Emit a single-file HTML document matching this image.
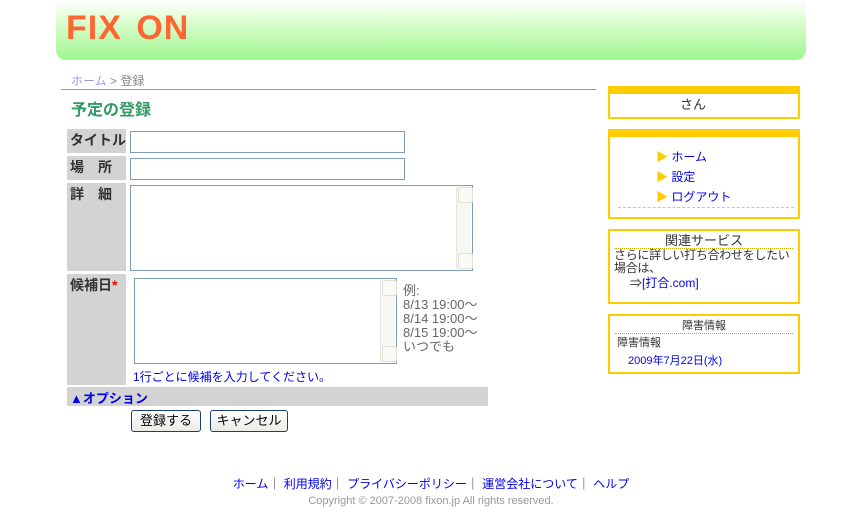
<!DOCTYPE html>
<html><head><meta charset="utf-8"><style>
*{margin:0;padding:0;box-sizing:border-box}
body{width:862px;height:521px;background:#fff;font-family:"Liberation Sans","Noto Sans CJK JP",sans-serif;font-size:12px;color:#333;position:relative;overflow:hidden}
.a{position:absolute}
.lbl{position:absolute;left:67px;width:59px;background:#d3d3d3;font-weight:bold;font-size:14px;color:#333;padding:1px 0 0 3px}
.inp{position:absolute;border:1px solid #7f9db9;background:#fff}
.sb{position:absolute;right:1px;top:1px;bottom:1px;width:15px;background:#f7f7f3;border-left:1px solid #e8e8e0}
.sb:before,.sb:after{content:"";position:absolute;left:1px;width:13px;height:14px;border:1px solid #e0e0d8;border-radius:2px;background:#fafaf6}
.sb:before{top:0}.sb:after{bottom:0}
.box{position:absolute;left:608px;width:192px;border:2px solid #ffcc00;background:#fff}
.btn{position:absolute;top:410px;height:22px;border:1px solid #1c3f6e;border-radius:3px;background:linear-gradient(#fff,#ecebe6);font-size:13px;text-align:center;line-height:20px;color:#000}
a{color:#0000ee;text-decoration:none}
</style></head><body>
<div class="a" style="left:56px;top:0;width:750px;height:60px;border-radius:0 0 10px 10px;background:linear-gradient(#fff 0%,#ddfdd0 35%,#9ef78e 100%)"></div>
<div class="a" style="left:66px;top:9px;font-size:34px;font-weight:bold;color:#ff6633;letter-spacing:1px;word-spacing:4px">FIX ON</div>
<div class="a" style="left:71px;top:74px;font-size:12px;line-height:14px;color:#888"><span style="color:#9999ee">ホーム</span> &gt; 登録</div>
<div class="a" style="left:61px;top:89px;width:535px;height:1px;background:#999"></div>
<div class="a" style="left:71px;top:96px;font-size:16px;font-weight:bold;color:#339966">予定の登録</div>

<div class="lbl" style="top:129px;height:24px">タイトル</div>
<div class="lbl" style="top:156px;height:24px">場　所</div>
<div class="lbl" style="top:183px;height:88px">詳　細</div>
<div class="lbl" style="top:274px;height:111px">候補日<span style="color:#f00">*</span></div>
<div class="inp" style="left:130px;top:131px;width:275px;height:22px"></div>
<div class="inp" style="left:130px;top:158px;width:275px;height:22px"></div>
<div class="inp" style="left:130px;top:185px;width:343px;height:86px"><div class="sb"></div></div>
<div class="inp" style="left:134px;top:278px;width:263px;height:86px"><div class="sb"></div></div>
<div class="a" style="left:403px;top:284px;font-size:13px;line-height:14px;color:#666">例:<br>8/13 19:00〜<br>8/14 19:00〜<br>8/15 19:00〜<br>いつでも</div>
<div class="a" style="left:133px;top:368px;font-size:12px;color:#0000ee">1行ごとに候補を入力してください。</div>
<div class="a" style="left:67px;top:387px;width:421px;height:19px;background:#d3d3d3;font-weight:bold;font-size:13px;color:#0000ee;padding:1px 0 0 3px">▲オプション</div>
<div class="btn" style="left:131px;width:70px">登録する</div>
<div class="btn" style="left:210px;width:78px">キャンセル</div>

<div class="box" style="top:86px;height:33px;border-top-width:8px;padding-right:22px;text-align:center;font-size:13px;line-height:22px">さん</div>
<div class="box" style="top:129px;height:90px;border-top-width:8px">
<div style="position:absolute;left:46px;top:10px;font-size:12px;line-height:20px"><span style="color:#ffcc00">▶</span>&nbsp;<a>ホーム</a><br><span style="color:#ffcc00">▶</span>&nbsp;<a>設定</a><br><span style="color:#ffcc00">▶</span>&nbsp;<a>ログアウト</a></div>
<div style="position:absolute;left:8px;right:4px;top:70px;border-top:1px dashed #ffcc00"></div></div>
<div class="box" style="top:229px;height:75px;font-size:12px">
<div style="margin:3px 5px 0 5px;text-align:center;border-bottom:1px dotted #ccaa00;line-height:14px;font-size:13px">関連サービス</div>
<div style="padding:0 4px;line-height:13px;letter-spacing:-0.3px">さらに詳しい打ち合わせをしたい場合は、</div>
<div style="padding-left:20px;line-height:16px">⇒<a>[打合.com]</a></div></div>
<div class="box" style="top:314px;height:60px;font-size:11px">
<div style="margin:3px 5px 0 5px;text-align:center;border-bottom:1px dotted #ccaa00;line-height:14px">障害情報</div>
<div style="padding:2px 7px;line-height:14px">障害情報</div>
<div style="padding-left:18px;color:#0000ee">2009年7月22日(水)</div></div>

<div class="a" style="left:0;width:862px;top:475px;text-align:center;font-size:12px;color:#333"><a>ホーム</a>｜ <a>利用規約</a>｜ <a>プライバシーポリシー</a>｜ <a>運営会社について</a>｜ <a>ヘルプ</a></div>
<div class="a" style="left:0;width:862px;top:495px;text-align:center;font-size:11px;color:#999">Copyright © 2007-2008 fixon.jp All rights reserved.</div>
</body></html>
